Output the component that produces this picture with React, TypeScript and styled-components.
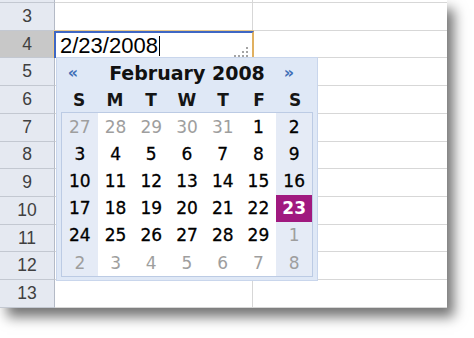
import React from 'react'
import styled, { createGlobalStyle } from 'styled-components'

const GlobalStyle = createGlobalStyle`
  *, *::before, *::after { box-sizing: border-box; }
  html, body { margin: 0; padding: 0; background: #ffffff; }
`

const ROW_H = 27.73
const CAL_ROW_H = 27.2

const Page = styled.div`
  width: 474px;
  height: 338px;
  background: #ffffff;
`

const Sheet = styled.div`
  position: relative;
  width: 447px;
  height: 308px;
  overflow: hidden;
  background: #ffffff;
  box-shadow: 7px 9px 12px rgba(0, 0, 0, 0.55);
`

const Row = styled.div<{ $h: number }>`
  display: grid;
  grid-template-columns: 55px 198px 1fr;
  height: ${p => p.$h}px;
`

const RowHead = styled.div<{ $active?: boolean }>`
  display: flex;
  align-items: center;
  justify-content: center;
  background: ${p => (p.$active ? '#c8c8c8' : '#e5e9f1')};
  border-right: 1px solid #b4bac6;
  border-bottom: 1px solid #c3c8d1;
  font: 17.5px 'Liberation Sans', Arial, sans-serif;
  color: #404040;
`

const Cell = styled.div<{ $divider?: boolean }>`
  border-bottom: 1px solid #d7d7d7;
  border-right: ${p => (p.$divider ? '1px solid #d7d7d7' : 'none')};
`

const Editor = styled.div`
  position: absolute;
  left: 54px;
  top: 31px;
  width: 200px;
  height: 27px;
  display: flex;
  align-items: center;
  padding: 1px 0 0 4px;
  background: #ffffff;
  border-top: 2px solid #3f67c4;
  border-left: 2px solid #3f67c4;
  border-right: 2px solid #e0b060;
  box-shadow: 0 -1px 0 #e7c98f, -1px 0 0 #e7c98f;
  font: 22px 'Liberation Sans', Arial, sans-serif;
  color: #000000;
`

const Caret = styled.span`
  display: inline-block;
  width: 1.5px;
  height: 20px;
  margin-left: 1px;
  background: #000000;
`

const Grip = styled.svg`
  position: absolute;
  right: 3px;
  bottom: 0;
`

const Popup = styled.div`
  position: absolute;
  left: 56px;
  top: 57px;
  width: 262px;
  padding: 0 4px 3px 4px;
  background: #dfe8f6;
  border: 1px solid #c9d6ec;
  font-family: 'DejaVu Sans', Verdana, sans-serif;
`

const Header = styled.div`
  display: grid;
  grid-template-columns: repeat(7, 1fr);
  align-items: center;
  height: 29px;
`

const Nav = styled.span`
  padding-right: 12px;
  text-align: center;
  font-size: 16px;
  font-weight: bold;
  color: #3f6fb6;
`

const Month = styled.span`
  grid-column: 2 / span 5;
  text-align: center;
  font-size: 19px;
  font-weight: bold;
  color: #111111;
`

const DayNames = styled.div`
  display: grid;
  grid-template-columns: repeat(7, 1fr);
  align-items: center;
  height: 25px;
`

const DayName = styled.span`
  text-align: center;
  font-size: 17px;
  font-weight: bold;
  color: #151515;
`

const Grid = styled.div`
  display: grid;
  grid-template-columns: repeat(7, 1fr);
  grid-auto-rows: ${CAL_ROW_H}px;
  background: #ffffff;
  border: 1px solid #bccbe4;
`

const Day = styled.div<{ $weekend?: boolean; $muted?: boolean; $selected?: boolean }>`
  display: flex;
  align-items: center;
  justify-content: center;
  font-size: 17px;
  font-weight: ${p => (p.$selected ? 'bold' : 'normal')};
  color: ${p => (p.$selected ? '#ffffff' : p.$muted ? '#9e9e9e' : '#000000')};
  background: ${p => (p.$selected ? '#a0197f' : p.$weekend ? '#e5ebf6' : 'transparent')};
  -webkit-text-stroke: ${p => (p.$muted || p.$selected ? '0' : '0.3px #000')};
`

const rows = [3, 4, 5, 6, 7, 8, 9, 10, 11, 12, 13]
const dayNames = ['S', 'M', 'T', 'W', 'T', 'F', 'S']

type DayCell = { n: number; muted: boolean }

const buildDays = (): DayCell[] => {
  const days: DayCell[] = []
  for (let n = 27; n <= 31; n++) days.push({ n, muted: true })
  for (let n = 1; n <= 29; n++) days.push({ n, muted: false })
  for (let n = 1; n <= 8; n++) days.push({ n, muted: true })
  return days
}

const GripDots: React.FC = () => {
  const dots = [
    [14, 2],
    [10, 6], [14, 6],
    [2, 10], [6, 10], [10, 10], [14, 10],
  ]
  return (
    <Grip width="17" height="13" viewBox="0 0 17 13">
      {dots.map(([x, y], i) => (
        <rect key={i} x={x} y={y} width="2" height="2" fill="#a4a4a4" />
      ))}
    </Grip>
  )
}

const App: React.FC = () => {
  const days = buildDays()

  return (
    <Page>
      <GlobalStyle />
      <Sheet>
        <Row $h={3}>
          <RowHead />
          <Cell $divider />
          <Cell />
        </Row>
        {rows.map(r => (
          <Row key={r} $h={ROW_H}>
            <RowHead $active={r === 4}>{r}</RowHead>
            <Cell $divider />
            <Cell />
          </Row>
        ))}

        <Editor>
          2/23/2008
          <Caret />
          <GripDots />
        </Editor>

        <Popup>
          <Header>
            <Nav>«</Nav>
            <Month>February 2008</Month>
            <Nav>»</Nav>
          </Header>
          <DayNames>
            {dayNames.map((d, i) => (
              <DayName key={i}>{d}</DayName>
            ))}
          </DayNames>
          <Grid>
            {days.map((d, i) => {
              const col = i % 7
              return (
                <Day
                  key={i}
                  $weekend={col === 0 || col === 6}
                  $muted={d.muted}
                  $selected={!d.muted && d.n === 23}
                >
                  {d.n}
                </Day>
              )
            })}
          </Grid>
        </Popup>
      </Sheet>
    </Page>
  )
}

export default App
